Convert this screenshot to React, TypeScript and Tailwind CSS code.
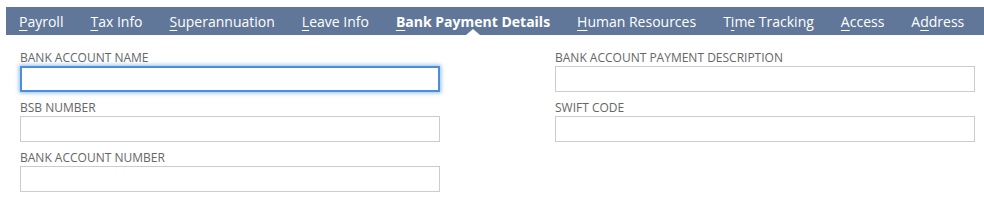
import React from "react";

const tabs: { pre: string; u: string; post: string; active?: boolean }[] = [
  { pre: "", u: "P", post: "ayroll" },
  { pre: "", u: "T", post: "ax Info" },
  { pre: "", u: "S", post: "uperannuation" },
  { pre: "", u: "L", post: "eave Info" },
  { pre: "", u: "B", post: "ank Payment Details", active: true },
  { pre: "", u: "H", post: "uman Resources" },
  { pre: "T", u: "i", post: "me Tracking" },
  { pre: "", u: "A", post: "ccess" },
  { pre: "A", u: "d", post: "dress" },
];

function Field({ label, focused }: { label: string; focused?: boolean }) {
  return (
    <div className="flex flex-col">
      <div className="text-[12px] leading-[14px] text-[#666666] uppercase whitespace-nowrap">{label}</div>
      <div
        className={
          focused
            ? "mt-[1px] h-[26px] w-[420px] border-2 border-[#4a8fdc] bg-white shadow-[0_0_4px_1px_rgba(74,143,220,0.6)]"
            : "mt-[1px] h-[26px] w-[420px] border border-[#cccccc] bg-white"
        }
      />
    </div>
  );
}

export default function App() {
  return (
    <div className="w-[984px] h-[208px] bg-white" style={{ fontFamily: '"Open Sans", sans-serif' }}>
      <div className="pt-[7px] pl-[6px]">
        <div className="h-[28px] bg-[#607799] flex items-center pl-[13px] gap-[27px] text-white text-[14px] whitespace-nowrap">
          {tabs.map((t, i) => (
            <div key={i} className={"relative h-full flex items-center shrink-0 " + (t.active ? "font-bold" : "")}>
              <span>
                {t.pre}
                <span className="underline underline-offset-[3px]">{t.u}</span>
                {t.post}
              </span>
              {t.active && (
                <div className="absolute bottom-0 left-1/2 -translate-x-1/2 w-0 h-0 border-l-[7px] border-r-[7px] border-b-[6px] border-l-transparent border-r-transparent border-b-white" />
              )}
            </div>
          ))}
        </div>
      </div>
      <div className="flex pl-[20px] pt-[16px] gap-[115px]">
        <div className="flex flex-col gap-[9px]">
          <Field label="Bank Account Name" focused />
          <Field label="BSB Number" />
          <Field label="Bank Account Number" />
        </div>
        <div className="flex flex-col gap-[9px]">
          <Field label="Bank Account Payment Description" />
          <Field label="Swift Code" />
        </div>
      </div>
    </div>
  );
}
